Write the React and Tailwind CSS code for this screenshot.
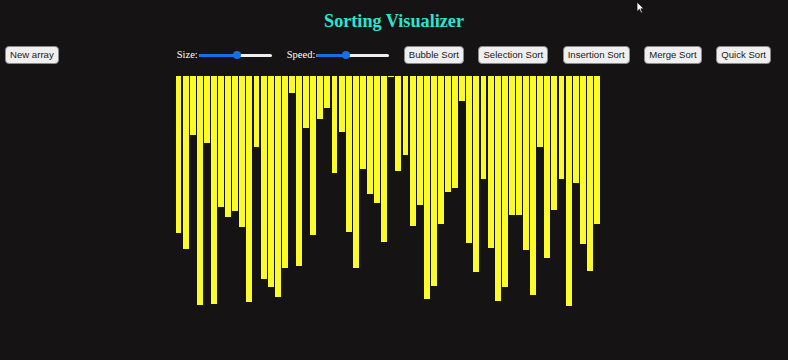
import { useState } from 'react'

const HEIGHTS = [
  157, 173, 59, 229, 67, 228, 131, 141, 135, 151,
  226, 71, 203, 211, 221, 192, 17, 190, 52, 159,
  43, 32, 97, 56, 156, 192, 93, 118, 127, 166,
  1, 95, 79, 150, 129, 223, 210, 148, 116, 112,
  25, 167, 196, 103, 172, 225, 211, 139, 139, 174,
  219, 71, 182, 134, 103, 230, 107, 168, 195, 148,
]

const SORTS = ['Bubble Sort', 'Selection Sort', 'Insertion Sort', 'Merge Sort', 'Quick Sort']

function Btn({ children, className = '' }) {
  return (
    <button
      className={`h-[17.5px] px-[4px] flex items-center bg-[#efefef] text-[#1a1a1a] border border-[#8a8a8a] rounded-[4px] text-[9.6px] leading-none font-['Liberation_Sans',Arial,sans-serif] ${className}`}
    >
      {children}
    </button>
  )
}

function Slider({ value }) {
  return (
    <div className="relative w-[73px] h-[8px] flex items-center">
      <div className="w-full h-[3px] rounded-full bg-[#efefef] overflow-hidden">
        <div className="h-full bg-[#1570e6]" style={{ width: `${value}%` }} />
      </div>
      <div
        className="absolute top-0 w-[8px] h-[8px] rounded-full bg-[#1570e6]"
        style={{ left: `calc(${value}% - 4px)` }}
      />
    </div>
  )
}

export default function App() {
  const [bars] = useState(HEIGHTS)

  return (
    <div className="relative w-[788px] h-[360px] bg-[#151314] overflow-hidden">
      <h3 className="pt-[11px] text-center text-[18.2px] leading-[20px] font-bold text-[#2fe3d2] font-['Liberation_Serif','Times_New_Roman',serif]">
        Sorting Visualizer
      </h3>

      <div className="mt-[15px] flex items-center h-[18px]">
        <Btn className="ml-[5px]">New array</Btn>

        <div className="ml-[118px] flex items-center text-white text-[10.5px] font-['Liberation_Serif','Times_New_Roman',serif]">
          <span className="mr-[1px]">Size:</span>
          <Slider value={52} />
        </div>

        <div className="ml-[15px] flex items-center text-white text-[10.5px] font-['Liberation_Serif','Times_New_Roman',serif]">
          <span className="mr-[1px]">Speed:</span>
          <Slider value={41} />
        </div>

        <div className="ml-[14.5px] flex items-center gap-[14.5px]">
          {SORTS.map(s => (
            <Btn key={s}>{s}</Btn>
          ))}
        </div>
      </div>

      <div className="mt-[12px] ml-[175.5px] w-[424px] flex items-start gap-[1.2px]">
        {bars.map((h, i) => (
          <div key={i} className="flex-1 bg-[#fbfb2c]" style={{ height: h }} />
        ))}
      </div>

      <svg className="absolute left-[636px] top-[1px]" width="9" height="13" viewBox="0 0 9 13">
        <path d="M1 1 L1 10.5 L3.4 8.3 L5 12 L6.4 11.4 L4.9 7.8 L8 7.8 Z" fill="#fff" stroke="#111" strokeWidth="0.8" />
      </svg>
    </div>
  )
}
